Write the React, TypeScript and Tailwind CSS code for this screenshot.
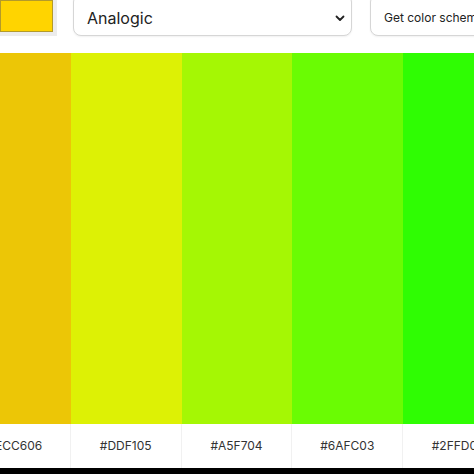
const colors = ["#ECC606", "#DDF105", "#A5F704", "#6AFC03", "#2FFD03"];

function Chevron() {
  return (
    <svg width="10" height="7" viewBox="0 0 10 7" fill="none">
      <path d="M1.5 1.5 5 5l3.5-3.5" stroke="#222" strokeWidth="1.8" strokeLinecap="round" strokeLinejoin="round" />
    </svg>
  );
}

export default function App() {
  return (
    <div className="flex h-[474px] w-[474px] flex-col overflow-hidden bg-white font-['Inter',sans-serif] text-[#222]">
      <header className="flex h-[53px] shrink-0 items-start">
        <div className="flex h-[36px] w-[57px] shrink-0 items-start bg-[#ececec]">
          <div className="h-[32px] w-[53px] border border-[#b39a2a] bg-[#FFD400]" />
        </div>
        <div className="ml-[16px] mt-[-6px] flex h-[42px] w-[279px] shrink-0 items-center justify-between rounded-lg border border-[#d6d6d6] bg-white pl-[13px] pr-[5px] shadow-[0_1px_2px_rgba(0,0,0,0.06)]">
          <span className="pt-[6px] text-[16px]">Analogic</span>
          <span className="pt-[6px] pr-[1px]">
            <Chevron />
          </span>
        </div>
        <button className="ml-[18px] mt-[-6px] flex h-[42px] w-[150px] shrink-0 items-center whitespace-nowrap rounded-lg border border-[#d6d6d6] bg-white pl-[13px] pt-[6px] text-[12px] shadow-[0_1px_2px_rgba(0,0,0,0.06)]">
          Get color scheme
        </button>
      </header>
      <main className="ml-[-40px] grid w-[554px] flex-1 grid-cols-5">
        {colors.map((c) => (
          <div key={c} className="flex flex-col">
            <div className="h-[371px]" style={{ backgroundColor: c }} />
            <div className="flex h-[44px] items-center justify-center border-r border-[#f1f1f1] text-[12px] text-[#333]">
              {c}
            </div>
          </div>
        ))}
      </main>
      <footer className="h-[6px] shrink-0 bg-black" />
    </div>
  );
}
